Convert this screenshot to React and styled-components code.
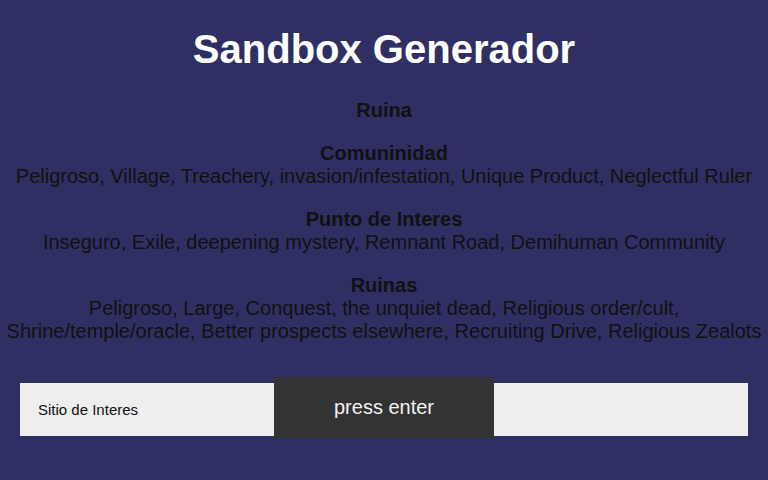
import React from 'react';
import styled, { createGlobalStyle } from 'styled-components';

const GlobalStyle = createGlobalStyle`
  html, body {
    margin: 0;
    padding: 0;
    background: #2f2f63;
  }
  body {
    font-family: "Liberation Sans", Arial, sans-serif;
    color: #111;
  }
`;

const Page = styled.main`
  min-height: 100vh;
  padding-top: 26px;
  box-sizing: border-box;
  text-align: center;
`;

const Title = styled.h1`
  margin: 0 0 27px;
  font-size: 40px;
  line-height: 46px;
  font-weight: 700;
  color: #fff;
`;

const Results = styled.div`
  display: flex;
  flex-direction: column;
  gap: 20px;
`;

const Section = styled.section`
  font-size: 20px;
  line-height: 23px;
`;

const Heading = styled.h3`
  margin: 0;
  font-size: 20px;
  font-weight: 700;
`;

const Items = styled.p`
  margin: 0;
`;

const Form = styled.form`
  position: relative;
  margin: 40px 20px 0;
  height: 53px;
  background: #eee;
`;

const Field = styled.input`
  width: 100%;
  height: 100%;
  box-sizing: border-box;
  border: none;
  outline: none;
  background: transparent;
  padding: 0 18px;
  font-family: inherit;
  font-size: 15px;
  color: #111;

  &::placeholder {
    color: #111;
  }
`;

const Submit = styled.button`
  position: absolute;
  left: 50%;
  top: -6px;
  width: 220px;
  height: 61px;
  transform: translateX(-50%);
  border: none;
  border-radius: 0;
  background: #333;
  color: #f2f2f2;
  font-family: inherit;
  font-size: 20px;
  cursor: pointer;
`;

const sections = [
  { name: 'Ruina' },
  {
    name: 'Comuninidad',
    items: 'Peligroso, Village, Treachery, invasion/infestation, Unique Product, Neglectful Ruler',
  },
  {
    name: 'Punto de Interes',
    items: 'Inseguro, Exile, deepening mystery, Remnant Road, Demihuman Community',
  },
  {
    name: 'Ruinas',
    items:
      'Peligroso, Large, Conquest, the unquiet dead, Religious order/cult, Shrine/temple/oracle, Better prospects elsewhere, Recruiting Drive, Religious Zealots',
  },
];

export default function App() {
  return (
    <>
      <GlobalStyle />
      <Page>
        <Title>Sandbox Generador</Title>
        <Results>
          {sections.map((s) => (
            <Section key={s.name}>
              <Heading>{s.name}</Heading>
              {s.items && <Items>{s.items}</Items>}
            </Section>
          ))}
        </Results>
        <Form onSubmit={(e) => e.preventDefault()}>
          <Field placeholder="Sitio de Interes" />
          <Submit type="submit">press enter</Submit>
        </Form>
      </Page>
    </>
  );
}
